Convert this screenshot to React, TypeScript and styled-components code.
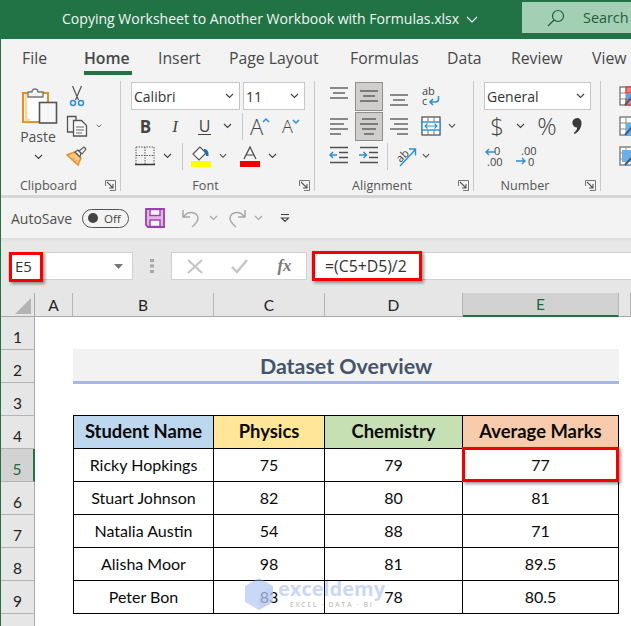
import React from "react";
import styled, { createGlobalStyle } from "styled-components";

const GlobalStyle = createGlobalStyle`
    html, body {
        margin: 0;
        padding: 0;
        background: #ffffff;
    }
    * {
        box-sizing: border-box;
    }
`;

const uiFont = `"Open Sans", "Noto Sans", sans-serif`;
const cellFont = `Lato, "Liberation Sans", sans-serif`;
const green = "#217346";

const Window = styled.div`
    width: 631px;
    height: 626px;
    overflow: hidden;
    display: flex;
    flex-direction: column;
    border-left: 1px solid ${green};
    font-family: ${uiFont};
    color: #444;
    position: relative;
`;

const TitleBar = styled.header`
    height: 39px;
    flex: none;
    margin-left: -1px;
    background: ${green};
    display: flex;
    align-items: flex-start;
    color: #f1f6f3;
`;

const TitleText = styled.div`
    margin-left: 62px;
    width: 398px;
    height: 38px;
    line-height: 38px;
    font-size: 14.05px;
    white-space: nowrap;
`;

const TitleChevron = styled.div`
    width: 62px;
    height: 38px;
    padding-left: 6px;
    display: flex;
    align-items: center;
`;

const SearchBox = styled.div`
    margin-top: 2px;
    flex: 1;
    height: 31px;
    background: #a3cfb4;
    color: #1c5e3a;
    display: flex;
    align-items: center;
    padding-left: 25px;
    gap: 18px;
    font-size: 14.4px;
`;

const Tabs = styled.nav`
    height: 36px;
    flex: none;
    background: #f3f3f3;
    display: flex;
    padding-left: 21px;
`;

const Tab = styled.div<{ $w: number; $active?: boolean }>`
    width: ${(p) => p.$w}px;
    height: 36px;
    padding-top: 7px;
    flex: none;
    font-size: 15.8px;
    line-height: 24px;
    white-space: nowrap;
    color: #484848;
    font-weight: ${(p) => (p.$active ? 600 : 400)};
    position: relative;
    &::after {
        content: "";
        display: ${(p) => (p.$active ? "block" : "none")};
        position: absolute;
        left: 0;
        top: 32px;
        width: 48px;
        height: 4px;
        background: ${green};
    }
`;

const Ribbon = styled.section`
    height: 123px;
    flex: none;
    background: #f3f3f3;
    border-bottom: 3px solid #d6d6d6;
    padding-top: 6px;
    display: flex;
    overflow: hidden;
`;

const Group = styled.div<{ $w: number; $pad: number }>`
    width: ${(p) => p.$w}px;
    height: 110px;
    flex: none;
    padding-left: ${(p) => p.$pad}px;
    border-right: 1px solid #c8c8c8;
    display: flex;
    flex-direction: column;
`;

const GroupBody = styled.div`
    height: 90px;
    flex: none;
    display: flex;
`;

const Rows = styled.div`
    display: flex;
    flex-direction: column;
`;

const GroupLabel = styled.div<{ $pad: number }>`
    margin: 5px 4px 0 -${(p) => p.$pad}px;
    height: 20px;
    display: flex;
    align-items: center;
    font-size: 12.6px;
    color: #555;
    span {
        flex: 1;
        text-align: center;
        padding-top: 1px;
    }
    svg {
        margin-left: 9px;
        margin-top: 1px;
    }
`;

const ToolRow = styled.div`
    height: 30px;
    flex: none;
    display: flex;
    align-items: center;
`;

const Tool = styled.div<{ $w: number; $active?: boolean; $ml?: number }>`
    width: ${(p) => p.$w}px;
    height: 100%;
    flex: none;
    margin-left: ${(p) => p.$ml ?? 0}px;
    display: flex;
    align-items: center;
    justify-content: center;
    position: relative;
    &::before {
        content: "";
        display: ${(p) => (p.$active ? "block" : "none")};
        position: absolute;
        left: 1px;
        right: 1px;
        top: 1px;
        bottom: 0;
        background: #cfcecd;
        border: 1px solid #8e8e8e;
    }
    svg {
        position: relative;
    }
`;

const Glyph = styled.span<{ $size: number; $weight?: number; $serif?: boolean; $italic?: boolean }>`
    font-size: ${(p) => p.$size}px;
    font-weight: ${(p) => p.$weight ?? 400};
    font-style: ${(p) => (p.$italic ? "italic" : "normal")};
    font-family: ${(p) => (p.$serif ? `"Liberation Serif", serif` : uiFont)};
    line-height: 1;
    color: #444;
`;

const UnderGlyph = styled(Glyph)`
    border-bottom: 1.5px solid #444;
    line-height: 16px;
    padding: 0 1px;
`;

const VSep = styled.div<{ $ml: number }>`
    width: 1px;
    height: 27px;
    flex: none;
    margin-left: ${(p) => p.$ml}px;
    background: #c8c8c8;
`;

const SelectRow = styled.div`
    height: 30px;
    flex: none;
    display: flex;
    align-items: center;
    gap: 3px;
`;

const SelectBox = styled.div<{ $w: number }>`
    width: ${(p) => p.$w}px;
    height: 28px;
    background: #ffffff;
    border: 1px solid #c6c6c6;
    display: flex;
    align-items: center;
    justify-content: space-between;
    padding: 0 5px 0 2px;
    font-size: 14px;
    color: #333;
`;

const PasteCol = styled.div`
    width: 40px;
    flex: none;
    padding-top: 5px;
    display: flex;
    flex-direction: column;
    align-items: center;
    font-size: 14px;
    color: #505050;
    svg:first-child {
        margin-bottom: 1px;
    }
    span {
        line-height: 20px;
        margin-bottom: 7px;
    }
`;

const QuickBar = styled.div`
    height: 40px;
    flex: none;
    background: #f3f3f3;
    display: flex;
    align-items: center;
    padding-left: 10px;
    font-size: 14px;
    color: #505050;
`;

const AutoSaveLabel = styled.span`
    width: 71px;
    flex: none;
`;

const Toggle = styled.div`
    width: 47px;
    height: 19px;
    border: 1px solid #555;
    border-radius: 10px;
    display: flex;
    align-items: center;
    padding: 0 5px;
    gap: 6px;
    font-size: 11.5px;
    color: #444;
    flex: none;
    &::before {
        content: "";
        width: 10px;
        height: 10px;
        border-radius: 50%;
        background: #444;
    }
`;

const QuickItem = styled.div<{ $ml: number }>`
    margin-left: ${(p) => p.$ml}px;
    display: flex;
    align-items: center;
    flex: none;
`;

const FormulaBar = styled.div`
    height: 55px;
    flex: none;
    background: linear-gradient(#dedede, #e8e8e8 5px, #e6e6e6);
    padding-top: 14px;
    display: flex;
    align-items: flex-start;
`;

const NameBox = styled.div`
    margin-left: 7px;
    width: 125px;
    height: 28px;
    background: #ffffff;
    border: 1px solid #d0d0d0;
    display: flex;
    align-items: center;
    justify-content: space-between;
    padding: 0 9px 0 6px;
    font-size: 15px;
    color: #333;
    position: relative;
`;

const Highlight = styled.div<{ $l: number; $t: number; $r: number; $b: number }>`
    position: absolute;
    left: ${(p) => p.$l}px;
    top: ${(p) => p.$t}px;
    right: ${(p) => p.$r}px;
    bottom: ${(p) => p.$b}px;
    border: 3px solid #f50000;
    box-shadow: 2px 2px 3px rgba(0, 0, 0, 0.4);
    z-index: 3;
    pointer-events: none;
`;

const GripDots = styled.div`
    width: 38px;
    height: 28px;
    flex: none;
    display: flex;
    align-items: center;
    justify-content: center;
`;

const FxBox = styled.div`
    width: 136px;
    height: 28px;
    flex: none;
    background: #ffffff;
    border: 1px solid #d0d0d0;
    display: flex;
    align-items: center;
`;

const FxSlot = styled.div`
    width: 45px;
    flex: none;
    display: flex;
    justify-content: center;
    align-items: center;
`;

const FxGlyph = styled.span`
    font-family: "Liberation Serif", serif;
    font-style: italic;
    font-weight: 700;
    font-size: 17px;
    color: #7a7a7a;
`;

const FormulaInput = styled.div`
    margin-left: 4px;
    flex: 1;
    height: 28px;
    background: #ffffff;
    border: 1px solid #d0d0d0;
    border-right: none;
    padding-left: 13px;
    display: flex;
    align-items: center;
    font-size: 15.8px;
    color: #333;
    position: relative;
`;

const Sheet = styled.div`
    flex: 1;
    display: grid;
    grid-template-columns: 34px 38px 141px 111px 138px 156px 1fr;
    grid-auto-rows: 33px;
    grid-template-rows: 24px;
    background: #ffffff;
    font-family: ${cellFont};
    position: relative;
`;

const Corner = styled.div`
    background: #e6e6e6;
    border-right: 1px solid #a8a8a8;
    border-bottom: 1px solid #a8a8a8;
    display: flex;
    justify-content: flex-end;
    align-items: flex-end;
    padding: 0 3px 2px 0;
`;

const ColHead = styled.div<{ $selected?: boolean }>`
    background: ${(p) => (p.$selected ? "#d2d2d2" : "#e6e6e6")};
    color: ${(p) => (p.$selected ? "#1d6b40" : "#222")};
    border-right: 1px solid #b4b4b4;
    border-bottom: ${(p) => (p.$selected ? `2px solid ${green}` : "1px solid #a8a8a8")};
    display: flex;
    align-items: center;
    justify-content: center;
    font-size: 15.5px;
`;

const RowHead = styled.div<{ $selected?: boolean }>`
    background: ${(p) => (p.$selected ? "#d2d2d2" : "#e6e6e6")};
    color: ${(p) => (p.$selected ? "#1d6b40" : "#222")};
    border-right: ${(p) => (p.$selected ? `2px solid ${green}` : "1px solid #a8a8a8")};
    border-bottom: 1px solid #b4b4b4;
    display: flex;
    align-items: center;
    justify-content: center;
    padding-top: 7px;
    font-size: 15.5px;
`;

const TitleCell = styled.div`
    grid-column: span 4;
    margin: -1px 0 -1px;
    background: #f2f2f2;
    border-bottom: 3px solid #a5b7de;
    display: flex;
    align-items: center;
    justify-content: center;
    padding-top: 2px;
    font-size: 21.4px;
    font-weight: 700;
    color: #44546a;
`;

const Cell = styled.div<{ $bg?: string; $bold?: boolean; $top?: boolean; $left?: boolean }>`
    background: ${(p) => p.$bg ?? "transparent"};
    margin-top: ${(p) => (p.$top ? -1 : 0)}px;
    border-right: 1px solid #000;
    border-bottom: 1px solid #000;
    border-top: ${(p) => (p.$top ? "1px solid #000" : "none")};
    border-left: ${(p) => (p.$left ? "1px solid #000" : "none")};
    display: flex;
    align-items: center;
    justify-content: center;
    padding-bottom: 2px;
    font-size: ${(p) => (p.$bold ? 18.4 : 16)}px;
    font-weight: ${(p) => (p.$bold ? 700 : 400)};
    color: #0a0a0a;
    position: relative;
`;

const Watermark = styled.div`
    position: absolute;
    left: 243px;
    top: 285px;
    display: flex;
    gap: 4px;
    z-index: 2;
    pointer-events: none;
`;

const WatermarkText = styled.div`
    display: flex;
    flex-direction: column;
    align-items: center;
    margin-top: -1px;
`;

const WatermarkName = styled.span`
    font-family: ${uiFont};
    font-size: 20px;
    line-height: 24px;
    font-weight: 700;
    color: rgba(150, 178, 240, 0.5);
`;

const WatermarkSub = styled.span`
    font-family: ${uiFont};
    font-size: 7px;
    line-height: 8px;
    font-weight: 600;
    letter-spacing: 1.6px;
    color: rgba(150, 150, 150, 0.6);
    white-space: nowrap;
`;

const Chevron = ({ color = "#444" }: { color?: string }) => (
    <svg width="9" height="6" viewBox="0 0 9 6">
        <path d="M1 1l3.5 3.5L8 1" fill="none" stroke={color} strokeWidth="1.2" />
    </svg>
);

const Launcher = () => (
    <svg width="11" height="11" viewBox="0 0 11 11">
        <path d="M.5 6V.5H10.5M10.5.5V10.5H5" fill="none" stroke="#777" strokeWidth="1" />
        <path d="M2 2l6 6M8 4v4H4" fill="none" stroke="#555" strokeWidth="1.1" />
    </svg>
);

const PasteIcon = () => (
    <svg width="40" height="40" viewBox="0 0 40 40">
        <rect x="5" y="7" width="25" height="29" fill="#fff" stroke="#e98d2b" strokeWidth="2" />
        <path d="M8 8v26h4" fill="none" stroke="#fcd79d" strokeWidth="2.5" />
        <path d="M10 11V6h4a3 3 0 0 1 6 0h5v5z" fill="#f3f3f3" stroke="#777" strokeWidth="1.3" />
        <rect x="21.5" y="16.5" width="17" height="20.5" fill="#f7f7f7" stroke="#555" strokeWidth="1.6" />
    </svg>
);

const ScissorsIcon = () => (
    <svg width="16" height="22" viewBox="0 0 16 22">
        <path d="M3.5 1l6 14M12.5 1l-6 14" fill="none" stroke="#555" strokeWidth="1.2" />
        <circle cx="4" cy="18" r="2.5" fill="none" stroke="#2e8fd6" strokeWidth="1.5" />
        <circle cx="12" cy="18" r="2.5" fill="none" stroke="#2e8fd6" strokeWidth="1.5" />
    </svg>
);

const CopyIcon = () => (
    <svg width="22" height="22" viewBox="0 0 22 22">
        <path d="M7 17H1.5V1.5H10V5" fill="none" stroke="#555" strokeWidth="1.3" />
        <path d="M7.5 5.5h8l5 5v10.5h-13z" fill="#fafafa" stroke="#555" strokeWidth="1.3" />
        <path d="M10 12h8M10 15h8M10 18h6" stroke="#666" strokeWidth="1" />
    </svg>
);

const PainterIcon = () => (
    <svg width="22" height="20" viewBox="0 0 22 20">
        <path d="M1 9l7-3 7 6-3 7z" fill="#fbc98a" stroke="#e98d2b" strokeWidth="1.5" />
        <path d="M5 14l4-2M8 17l3-3" stroke="#e98d2b" strokeWidth="1" />
        <path d="M9 6l3-2 3 3-1 4z" fill="#f3f3f3" stroke="#555" strokeWidth="1.1" />
        <path d="M13 5l5-4 2 2-4 5z" fill="#f3f3f3" stroke="#555" strokeWidth="1.1" />
    </svg>
);

const GrowIcon = ({ down }: { down?: boolean }) => (
    <svg width="8" height="6" viewBox="0 0 8 6">
        <path d={down ? "M1 1l3 3 3-3" : "M1 5l3-3 3 3"} fill="none" stroke="#2e8fd6" strokeWidth="1.5" />
    </svg>
);

const GrowTool = styled.div`
    display: flex;
    align-items: flex-start;
    svg {
        margin-top: 2px;
        margin-left: -1px;
    }
`;

const BordersIcon = () => (
    <svg width="20" height="20" viewBox="0 0 20 20">
        <path
            d="M1 1h18M1 9.5h18M1 1v18M10 1v18M19 1v18"
            fill="none"
            stroke="#555"
            strokeWidth="1"
            strokeDasharray="1.4 1.2"
        />
        <path d="M0 18.5h20" stroke="#333" strokeWidth="1.5" />
    </svg>
);

const FillIcon = () => (
    <svg width="20" height="21" viewBox="0 0 20 21">
        <path d="M9 1L2 8l6 6 7-7z" fill="#fff" stroke="#555" strokeWidth="1.2" />
        <path d="M13 3c3 0 5 2 4.500 7h-2.500c0-2-.5-3.500-2-4z" fill="#1f6fb5" />
        <rect x="0" y="15" width="20" height="6" fill="#ffff00" />
    </svg>
);

const FontColorIcon = () => (
    <svg width="20" height="21" viewBox="0 0 20 21">
        <path d="M4 13L10 1l6 12M6 9h8" fill="none" stroke="#444" strokeWidth="1.2" />
        <rect x="0" y="15" width="20" height="6" fill="#f00000" />
    </svg>
);

const LinesIcon = ({ lines }: { lines: [number, number, number][] }) => (
    <svg width="20" height="22" viewBox="0 0 20 22">
        {lines.map(([a, b, y]) => (
            <path key={y} d={`M${a} ${y}H${b}`} stroke="#505050" strokeWidth="1.3" />
        ))}
    </svg>
);

const IndentIcon = ({ right }: { right?: boolean }) => (
    <svg width="20" height="20" viewBox="0 0 20 20">
        <path d="M1 1.500h18M10 6.500h9M10 11.500h9M1 16.500h18" stroke="#505050" strokeWidth="1.3" />
        <path
            d={right ? "M0 9h7M4.500 6l3 3-3 3" : "M8 9H1M4 6L1 9l3 3"}
            fill="none"
            stroke="#2e8fd6"
            strokeWidth="1.5"
        />
    </svg>
);

const WrapIcon = () => (
    <svg width="20" height="26" viewBox="0 -3 20 26">
        <text x="1" y="9" fontSize="11" fontFamily="Open Sans" fill="#444">
            ab
        </text>
        <text x="1" y="19" fontSize="11" fontFamily="Open Sans" fill="#444">
            c
        </text>
        <path d="M17.500 10v3a3 3 0 0 1-3 3H9M12 13l-3 3 3 3" fill="none" stroke="#2e8fd6" strokeWidth="1.6" />
    </svg>
);

const MergeIcon = () => (
    <svg width="20" height="20" viewBox="0 0 20 20">
        <rect x="1" y="1" width="18" height="18" fill="#fff" stroke="#555" strokeWidth="1.3" />
        <path d="M7 1v18M13 1v18" stroke="#777" strokeWidth="1" />
        <rect x="1" y="6" width="18" height="8" fill="#fff" stroke="#2e8fd6" strokeWidth="1.4" />
        <path d="M4 10h12M6.500 7.500L4 10l2.500 2.500M13.500 7.500L16 10l-2.500 2.500" fill="none" stroke="#2e8fd6" strokeWidth="1.1" />
    </svg>
);

const OrientIcon = () => (
    <svg width="28" height="28" viewBox="-3 -3 28 28">
        <text x="1" y="15" fontSize="11" fontFamily="Open Sans" fill="#444" transform="rotate(-45 7 11)">
            ab
        </text>
        <path d="M5 21L20 5M14 4h6.500v6.500" fill="none" stroke="#2e8fd6" strokeWidth="1.4" />
    </svg>
);

const CommaIcon = () => (
    <svg width="12" height="18" viewBox="0 0 12 18">
        <path d="M6 1a4.500 4.500 0 0 1 4.500 5c0 5-3 9-7 11l-.8-1c2-1.500 3.300-3.500 3.500-5.500A4.500 4.500 0 1 1 6 1z" fill="#3a3a3a" />
    </svg>
);

const DecimalIcon = ({ more }: { more?: boolean }) => (
    <svg width="24" height="26" viewBox="0 -3 24 26">
        <text x={more ? 6 : 9} y="9" fontSize="11" fontFamily="Open Sans" fill="#444">
            {more ? ".00" : "0"}
        </text>
        <text x={more ? 13 : 2} y="20" fontSize="11" fontFamily="Open Sans" fill="#444">
            {more ? "0" : ".00"}
        </text>
        <path
            d={more ? "M1 15h9M7 12l3 3-3 3" : "M10 6H1M4 3L1 6l3 3"}
            fill="none"
            stroke="#2e8fd6"
            strokeWidth="1.4"
        />
    </svg>
);

const StyleIcon = ({ variant }: { variant: number }) => (
    <svg width="20" height="20" viewBox="0 0 20 20">
        <rect x="1" y="1" width="18" height="18" fill="#fff" stroke="#666" strokeWidth="1.2" />
        <path d="M1 7h18M1 13h18M7 1v18M13 1v18" stroke="#888" strokeWidth="1" />
        {variant === 0 ? (
            <>
                <rect x="7" y="1" width="12" height="6" fill="#ef7f7f" stroke="#d03030" />
                <rect x="7" y="13" width="12" height="6" fill="#ef7f7f" stroke="#d03030" />
                <rect x="7" y="7" width="6" height="6" fill="#5aa7e0" />
            </>
        ) : (
            <rect x={variant === 1 ? 7 : 3} y={variant === 1 ? 7 : 4} width="12" height="12" fill="#6db0e8" />
        )}
        <path d="M6 19l8-9" stroke="#3a5f8a" strokeWidth="2" />
    </svg>
);

const SaveIcon = () => (
    <svg width="20" height="20" viewBox="0 0 20 20">
        <path d="M1 1h18v18H3l-2-2z" fill="#e3b6e6" stroke="#9c3fb0" strokeWidth="1.8" />
        <rect x="5" y="1.500" width="10" height="6" fill="#f3f3f3" stroke="#9c3fb0" strokeWidth="1.4" />
        <rect x="5" y="12" width="10" height="6.500" fill="#f3f3f3" stroke="#9c3fb0" strokeWidth="1.4" />
    </svg>
);

const UndoIcon = ({ redo }: { redo?: boolean }) => (
    <svg width="20" height="20" viewBox="0 0 20 20" style={redo ? { transform: "scaleX(-1)" } : undefined}>
        <path d="M2 2v7h7M2 9l4-3.500c4-2 9-1 10.500 2.500S16 15 11 19" fill="none" stroke="#a8a8a8" strokeWidth="1.5" />
    </svg>
);

const MoreIcon = () => (
    <svg width="10" height="10" viewBox="0 0 10 10">
        <path d="M1 1.500h8" stroke="#444" strokeWidth="1.1" />
        <path d="M1.500 5l3.500 3.500L8.500 5z" fill="none" stroke="#444" strokeWidth="1.1" />
    </svg>
);

const SearchIcon = () => (
    <svg width="18" height="18" viewBox="0 0 18 18">
        <circle cx="11" cy="7" r="5.500" fill="none" stroke="#1c5e3a" strokeWidth="1.2" />
        <path d="M7 11l-6 6" stroke="#1c5e3a" strokeWidth="1.3" />
    </svg>
);

const Caret = () => (
    <svg width="9" height="5" viewBox="0 0 9 5">
        <path d="M0 0h9L4.500 5z" fill="#777" />
    </svg>
);

const Grip = () => (
    <svg width="4" height="16" viewBox="0 0 4 16">
        <path d="M0 1h4v3H0zM0 6.500h4v3H0zM0 12h4v3H0z" fill="#a6a6a6" />
    </svg>
);

const CancelIcon = () => (
    <svg width="16" height="15" viewBox="0 0 16 15">
        <path d="M1 1l14 13M15 1L1 14" stroke="#c4c4c4" strokeWidth="2" />
    </svg>
);

const EnterIcon = () => (
    <svg width="17" height="15" viewBox="0 0 17 15">
        <path d="M1 8l5 5L16 1" fill="none" stroke="#c4c4c4" strokeWidth="2.4" />
    </svg>
);

const CornerMark = () => (
    <svg width="16" height="16" viewBox="0 0 16 16">
        <path d="M16 0v16H0z" fill="#b4b4b4" />
    </svg>
);

const LogoMark = () => (
    <svg width="30" height="32" viewBox="0 0 30 32">
        <path d="M15 0l14 8v16l-14 8-14-8V8z" fill="rgba(150,178,240,0.5)" />
        <path d="M15 16l14-8v16l-14 8z" fill="rgba(190,205,240,0.5)" />
    </svg>
);

const tabs = [
    { name: "File", w: 62 },
    { name: "Home", w: 74, active: true },
    { name: "Insert", w: 71 },
    { name: "Page Layout", w: 121 },
    { name: "Formulas", w: 97 },
    { name: "Data", w: 64 },
    { name: "Review", w: 81 },
    { name: "View", w: 40 },
];

const columns = ["A", "B", "C", "D", "E"];

const students = [
    { name: "Ricky Hopkings", physics: 75, chemistry: 79, average: "77" },
    { name: "Stuart Johnson", physics: 82, chemistry: 80, average: "81" },
    { name: "Natalia Austin", physics: 54, chemistry: 88, average: "71" },
    { name: "Alisha Moor", physics: 98, chemistry: 81, average: "89.5" },
    { name: "Peter Bon", physics: 83, chemistry: 78, average: "80.5" },
];

function App() {
    return (
        <>
            <GlobalStyle />
            <Window>
                <TitleBar>
                    <TitleText>Copying Worksheet to Another Workbook with Formulas.xlsx</TitleText>
                    <TitleChevron>
                        <svg width="12" height="7" viewBox="0 0 12 7">
                            <path d="M1 1l5 5 5-5" fill="none" stroke="#f1f6f3" strokeWidth="1.2" />
                        </svg>
                    </TitleChevron>
                    <SearchBox>
                        <SearchIcon />
                        Search
                    </SearchBox>
                </TitleBar>

                <Tabs>
                    {tabs.map((tab) => (
                        <Tab key={tab.name} $w={tab.w} $active={tab.active}>
                            {tab.name}
                        </Tab>
                    ))}
                </Tabs>

                <Ribbon>
                    <Group $w={120} $pad={17}>
                        <GroupBody>
                            <PasteCol>
                                <PasteIcon />
                                <span>Paste</span>
                                <Chevron />
                            </PasteCol>
                            <Rows>
                                <ToolRow>
                                    <Tool $w={38}>
                                        <ScissorsIcon />
                                    </Tool>
                                </ToolRow>
                                <ToolRow>
                                    <Tool $w={38}>
                                        <CopyIcon />
                                    </Tool>
                                    <Tool $w={6}>
                                        <Chevron />
                                    </Tool>
                                </ToolRow>
                                <ToolRow>
                                    <Tool $w={38}>
                                        <PainterIcon />
                                    </Tool>
                                </ToolRow>
                            </Rows>
                        </GroupBody>
                        <GroupLabel $pad={17}>
                            <span>Clipboard</span>
                            <Launcher />
                        </GroupLabel>
                    </Group>

                    <Group $w={194} $pad={10}>
                        <Rows>
                            <SelectRow>
                                <SelectBox $w={109}>
                                    Calibri
                                    <Chevron />
                                </SelectBox>
                                <SelectBox $w={62}>
                                    11
                                    <Chevron />
                                </SelectBox>
                            </SelectRow>
                            <ToolRow>
                                <Tool $w={29}>
                                    <Glyph $size={17} $weight={700}>
                                        B
                                    </Glyph>
                                </Tool>
                                <Tool $w={30}>
                                    <Glyph $size={17} $serif $italic>
                                        I
                                    </Glyph>
                                </Tool>
                                <Tool $w={29}>
                                    <UnderGlyph $size={16}>U</UnderGlyph>
                                </Tool>
                                <Tool $w={16}>
                                    <Chevron />
                                </Tool>
                                <VSep $ml={7} />
                                <Tool $w={34}>
                                    <GrowTool>
                                        <Glyph $size={22} $weight={300}>
                                            A
                                        </Glyph>
                                        <GrowIcon />
                                    </GrowTool>
                                </Tool>
                                <Tool $w={28}>
                                    <GrowTool>
                                        <Glyph $size={18} $weight={300}>
                                            A
                                        </Glyph>
                                        <GrowIcon down />
                                    </GrowTool>
                                </Tool>
                            </ToolRow>
                            <ToolRow>
                                <Tool $w={28}>
                                    <BordersIcon />
                                </Tool>
                                <Tool $w={16}>
                                    <Chevron />
                                </Tool>
                                <VSep $ml={7} />
                                <Tool $w={36}>
                                    <FillIcon />
                                </Tool>
                                <Tool $w={8}>
                                    <Chevron />
                                </Tool>
                                <Tool $w={20} $ml={13}>
                                    <FontColorIcon />
                                </Tool>
                                <Tool $w={24}>
                                    <Chevron />
                                </Tool>
                            </ToolRow>
                        </Rows>
                        <GroupLabel $pad={10}>
                            <span>Font</span>
                            <Launcher />
                        </GroupLabel>
                    </Group>

                    <Group $w={159} $pad={9}>
                        <Rows>
                            <ToolRow>
                                <Tool $w={30}>
                                    <LinesIcon lines={[[1, 19, 3], [4, 16, 8], [1, 19, 13]]} />
                                </Tool>
                                <Tool $w={30} $active>
                                    <LinesIcon lines={[[1, 19, 6], [4, 16, 11], [1, 19, 16]]} />
                                </Tool>
                                <Tool $w={30}>
                                    <LinesIcon lines={[[1, 19, 10], [4, 16, 15], [1, 19, 20]]} />
                                </Tool>
                                <Tool $w={34}>
                                    <WrapIcon />
                                </Tool>
                            </ToolRow>
                            <ToolRow>
                                <Tool $w={30}>
                                    <LinesIcon lines={[[1, 19, 4], [1, 15, 9], [1, 19, 14], [1, 12, 19]]} />
                                </Tool>
                                <Tool $w={30} $active>
                                    <LinesIcon lines={[[3, 17, 4], [1, 19, 9], [3, 17, 14], [5, 15, 19]]} />
                                </Tool>
                                <Tool $w={30}>
                                    <LinesIcon lines={[[1, 19, 4], [5, 19, 9], [1, 19, 14], [8, 19, 19]]} />
                                </Tool>
                                <Tool $w={34}>
                                    <MergeIcon />
                                </Tool>
                                <Tool $w={8}>
                                    <Chevron />
                                </Tool>
                            </ToolRow>
                            <ToolRow>
                                <Tool $w={30}>
                                    <IndentIcon />
                                </Tool>
                                <Tool $w={30}>
                                    <IndentIcon right />
                                </Tool>
                                <VSep $ml={3} />
                                <Tool $w={32} $ml={2}>
                                    <OrientIcon />
                                </Tool>
                                <Tool $w={8}>
                                    <Chevron />
                                </Tool>
                            </ToolRow>
                        </Rows>
                        <GroupLabel $pad={9}>
                            <span>Alignment</span>
                            <Launcher />
                        </GroupLabel>
                    </Group>

                    <Group $w={127} $pad={10}>
                        <Rows>
                            <SelectRow>
                                <SelectBox $w={107}>
                                    General
                                    <Chevron />
                                </SelectBox>
                            </SelectRow>
                            <ToolRow>
                                <Tool $w={26}>
                                    <Glyph $size={24} $weight={300}>
                                        $
                                    </Glyph>
                                </Tool>
                                <Tool $w={20}>
                                    <Chevron />
                                </Tool>
                                <Tool $w={34}>
                                    <Glyph $size={24} $weight={300}>
                                        %
                                    </Glyph>
                                </Tool>
                                <Tool $w={26}>
                                    <CommaIcon />
                                </Tool>
                            </ToolRow>
                            <ToolRow>
                                <Tool $w={26}>
                                    <DecimalIcon />
                                </Tool>
                                <Tool $w={34}>
                                    <DecimalIcon more />
                                </Tool>
                            </ToolRow>
                        </Rows>
                        <GroupLabel $pad={10}>
                            <span>Number</span>
                            <Launcher />
                        </GroupLabel>
                    </Group>

                    <Rows>
                        <ToolRow>
                            <Tool $w={30} $ml={13}>
                                <StyleIcon variant={0} />
                            </Tool>
                        </ToolRow>
                        <ToolRow>
                            <Tool $w={30} $ml={13}>
                                <StyleIcon variant={1} />
                            </Tool>
                        </ToolRow>
                        <ToolRow>
                            <Tool $w={30} $ml={13}>
                                <StyleIcon variant={2} />
                            </Tool>
                        </ToolRow>
                    </Rows>
                </Ribbon>

                <QuickBar>
                    <AutoSaveLabel>AutoSave</AutoSaveLabel>
                    <Toggle>Off</Toggle>
                    <QuickItem $ml={16}>
                        <SaveIcon />
                    </QuickItem>
                    <QuickItem $ml={16}>
                        <UndoIcon />
                    </QuickItem>
                    <QuickItem $ml={8}>
                        <Chevron color="#a8a8a8" />
                    </QuickItem>
                    <QuickItem $ml={9}>
                        <UndoIcon redo />
                    </QuickItem>
                    <QuickItem $ml={7}>
                        <Chevron color="#a8a8a8" />
                    </QuickItem>
                    <QuickItem $ml={17}>
                        <MoreIcon />
                    </QuickItem>
                </QuickBar>

                <FormulaBar>
                    <NameBox>
                        E5
                        <Caret />
                        <Highlight $l={0} $t={-1} $r={89} $b={-3} />
                    </NameBox>
                    <GripDots>
                        <Grip />
                    </GripDots>
                    <FxBox>
                        <FxSlot>
                            <CancelIcon />
                        </FxSlot>
                        <FxSlot>
                            <EnterIcon />
                        </FxSlot>
                        <FxSlot>
                            <FxGlyph>fx</FxGlyph>
                        </FxSlot>
                    </FxBox>
                    <FormulaInput>
                        =(C5+D5)/2
                        <Highlight $l={0} $t={-2} $r={209} $b={-2} />
                    </FormulaInput>
                </FormulaBar>

                <Sheet>
                    <Corner>
                        <CornerMark />
                    </Corner>
                    {columns.map((col) => (
                        <ColHead key={col} $selected={col === "E"}>
                            {col}
                        </ColHead>
                    ))}
                    <ColHead />

                    <RowHead>1</RowHead>
                    <div style={{ gridColumn: "span 6" }} />

                    <RowHead>2</RowHead>
                    <div />
                    <TitleCell>Dataset Overview</TitleCell>
                    <div />

                    <RowHead>3</RowHead>
                    <div style={{ gridColumn: "span 6" }} />

                    <RowHead>4</RowHead>
                    <div />
                    <Cell $bold $top $left $bg="#bdd7ee">
                        Student Name
                    </Cell>
                    <Cell $bold $top $bg="#ffe699">
                        Physics
                    </Cell>
                    <Cell $bold $top $bg="#c6e0b4">
                        Chemistry
                    </Cell>
                    <Cell $bold $top $bg="#f8cbad">
                        Average Marks
                    </Cell>
                    <div />

                    {students.map((s, i) => (
                        <React.Fragment key={s.name}>
                            <RowHead $selected={i === 0}>{i + 5}</RowHead>
                            <div />
                            <Cell $left>{s.name}</Cell>
                            <Cell>{s.physics}</Cell>
                            <Cell>{s.chemistry}</Cell>
                            <Cell>
                                {s.average}
                                {i === 0 && <Highlight $l={-1} $t={-2} $r={-1} $b={-1} />}
                            </Cell>
                            <div />
                        </React.Fragment>
                    ))}

                    <RowHead />

                    <Watermark>
                        <LogoMark />
                        <WatermarkText>
                            <WatermarkName>exceldemy</WatermarkName>
                            <WatermarkSub>EXCEL · DATA · BI</WatermarkSub>
                        </WatermarkText>
                    </Watermark>
                </Sheet>
            </Window>
        </>
    );
}

export default App;
